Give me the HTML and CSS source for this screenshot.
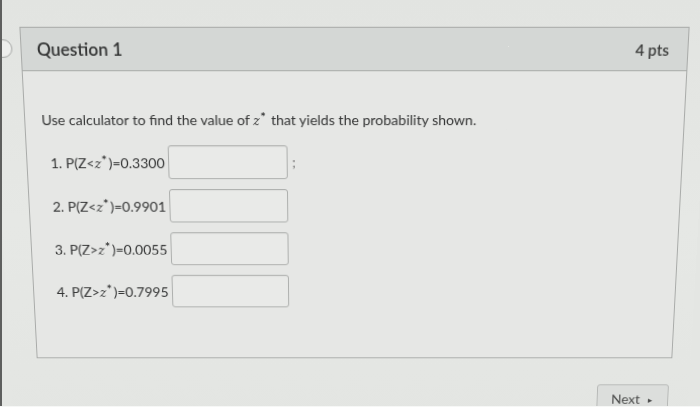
FILE: index.html
```html
<!DOCTYPE html>
<html lang="en">
<head>
<meta charset="utf-8">
<title>Question 1</title>
<link rel="stylesheet" href="styles.css">
</head>
<body>
<div class="photo">
  <div class="screen">
    <span class="nav-toggle" aria-hidden="true"></span>
    <section class="question">
      <header class="q-header">
        <h2 class="q-title">Question 1</h2>
        <span class="q-points">4 pts</span>
      </header>
      <div class="q-body">
        <p class="q-prompt">Use calculator to find the value of <i class="mz">z</i><sup class="star">*</sup> that yields the probability shown.</p>
        <ol class="q-items">
          <li class="q-item"><span class="q-label">1. P(Z&lt;<i class="mz">z</i><sup class="star">*</sup>)=0.3300</span><span class="q-input"></span><span class="q-sep">;</span></li>
          <li class="q-item"><span class="q-label">2. P(Z&lt;<i class="mz">z</i><sup class="star">*</sup>)=0.9901</span><span class="q-input"></span></li>
          <li class="q-item"><span class="q-label">3. P(Z&gt;<i class="mz">z</i><sup class="star">*</sup>)=0.0055</span><span class="q-input"></span></li>
          <li class="q-item"><span class="q-label">4. P(Z&gt;<i class="mz">z</i><sup class="star">*</sup>)=0.7995</span><span class="q-input"></span></li>
        </ol>
      </div>
    </section>
    <div class="q-footer">
      <button class="next-btn" type="button">Next <span class="tri">&#9656;</span></button>
    </div>
  </div>
</div>
</body>
</html>
```
FILE: styles.css
```css
html, body {
  margin: 0;
  padding: 0;
}
body {
  width: 700px;
  height: 407px;
  overflow: hidden;
  background: #e4e6e3;
  font-family: Lato, "Open Sans", "Liberation Sans", sans-serif;
  color: #343535;
}
.photo {
  position: relative;
  width: 700px;
  height: 407px;
  overflow: hidden;
}
.photo::after {
  content: "";
  position: absolute;
  inset: 0;
  box-shadow: inset 2px 0 0 #5e5f5e;
  border-bottom: 1px solid #f6f7f6;
  pointer-events: none;
}
.screen {
  position: relative;
  width: 700px;
  height: 450px;
  box-sizing: border-box;
  padding-top: 29px;
  background: linear-gradient(180deg, #e2e4e1 0%, #e6e8e5 50%, #e3e5e2 100%);
  transform-origin: 354px 192px;
  transform: perspective(1000px) rotateX(-9.1deg);
}
.nav-toggle {
  position: absolute;
  left: -4px;
  top: 41px;
  width: 22px;
  height: 16px;
  border-radius: 9px;
  border: 1px solid #a6a8a6;
  background: #eeefed;
}
.question {
  margin-left: 28px;
  width: 653px;
  height: 336px;
  box-sizing: border-box;
  border: 1px solid #a9aba9;
  background: #e6e7e5;
}
.q-header {
  display: flex;
  align-items: center;
  justify-content: space-between;
  height: 41px;
  padding: 0 18px 0 15px;
  background: #d4d7d5;
  border-bottom: 1px solid #a9aca9;
}
.q-title {
  margin: 0;
  font-size: 17px;
  font-weight: 600;
  color: #323333;
}
.q-points {
  font-size: 15px;
  font-weight: 600;
  color: #3a3b3a;
}
.q-body {
  padding: 39px 0 0 16px;
}
.q-prompt {
  margin: 0 0 15px;
  font-size: 14px;
  line-height: 18px;
}
.mz {
  font-family: "DejaVu Serif", "Liberation Serif", serif;
  font-style: italic;
  font-size: 0.9em;
}
.star {
  font-family: "DejaVu Sans", sans-serif;
  font-size: 0.6em;
  font-weight: bold;
  line-height: 0;
  vertical-align: 0.7em;
  margin-left: 1px;
  margin-right: 2px;
}
.q-items {
  list-style: none;
  margin: 0;
  padding: 0 0 0 7px;
  display: flex;
  flex-direction: column;
  gap: 10px;
}
.q-item {
  display: flex;
  align-items: center;
  height: 34px;
  font-size: 14px;
}
.q-label {
  white-space: nowrap;
}
.q-input {
  margin-left: 3px;
  width: 119px;
  height: 34px;
  box-sizing: border-box;
  border: 1px solid #aeb0ae;
  border-radius: 3px;
  background: #e9eae8;
  box-shadow: inset 0 1px 1px rgba(0,0,0,0.04);
}
.q-sep {
  margin-left: 5px;
  font-size: 13px;
  color: #666;
}
.q-footer {
  display: flex;
  justify-content: flex-end;
  width: 679px;
  padding-top: 28px;
}
.next-btn {
  width: 74px;
  height: 30px;
  box-sizing: border-box;
  padding: 0 0 0 14px;
  text-align: left;
  border: 1px solid #b7b9b7;
  border-radius: 3px;
  background: #dcdedc;
  font-family: Lato, "Open Sans", "Liberation Sans", sans-serif;
  font-size: 14px;
  color: #4a4b4a;
}
.tri {
  font-size: 9px;
  margin-left: 5px;
  vertical-align: 1px;
}
```
